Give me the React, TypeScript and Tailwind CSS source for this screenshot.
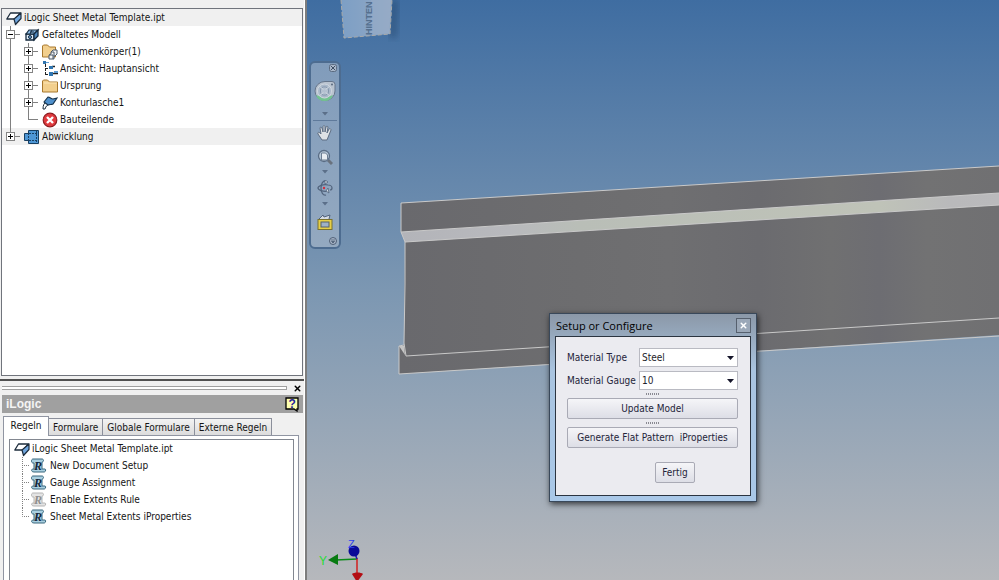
import type { ReactNode } from 'react';
import { X } from 'lucide-react';

const PartIcon = () => (
  <svg width="16" height="16" viewBox="0 0 16 16" className="shrink-0">
    <path d="M4.500 3h10L9 9H.8z" fill="#fff" stroke="#1d2c3c" strokeWidth="1.300" strokeLinejoin="round" />
    <path d="M15 3v5.500L9.500 14.500 8 9z" fill="#6fa5dc" stroke="#1d2c3c" strokeWidth="1.200" strokeLinejoin="round" />
  </svg>
);

const ModelIcon = () => (
  <svg width="16" height="16" viewBox="0 0 16 16" className="shrink-0">
    <path d="M2 7h8v6H2z" fill="#dbe9f5" stroke="#14293d" strokeWidth="1.3" />
    <path d="M2 7l3-4h9l-4 4z" fill="#8dbbe4" stroke="#14293d" strokeWidth="1.2" />
    <path d="M14 3v6l-4 4V7z" fill="#4c86bd" stroke="#14293d" strokeWidth="1.3" />
    <path d="M6 5h4M8 3L6 7" stroke="#14293d" />
    <circle cx="6" cy="10" r="1.500" fill="#6fa5dc" stroke="#14293d" />
  </svg>
);

const FolderIcon = () => (
  <svg width="16" height="16" viewBox="0 0 16 16" className="shrink-0">
    <path d="M.5 14V3l1-1h4l2 2h8v10z" fill="#f2cf8d" stroke="#a8782e" />
    <path d="M2 5h13" stroke="#fbe6b8" />
  </svg>
);

const SolidsIcon = () => (
  <svg width="16" height="16" viewBox="0 0 16 16" className="shrink-0">
    <path d="M.5 13V2l1-1h4l2 2h6v10z" fill="#f2cf8d" stroke="#a8782e" />
    <path d="M9 8l2-2h4v4l-2 2h-1v3H7v-4l2-1z" fill="#f3f5f7" stroke="#4c5966" />
    <path d="M7 11h4v4M9 8h3v4" fill="none" stroke="#4c5966" />
  </svg>
);

const ViewIcon = () => (
  <svg width="16" height="16" viewBox="0 0 16 16" className="shrink-0">
    <path d="M3.500 3v11M3 7.500h3M3 13.500h3" fill="none" stroke="#222" strokeDasharray="3 1" />
    <path d="M10 5.500h3M10 12.500h6" stroke="#222" strokeWidth="1.300" />
    <path d="M1 0h3v3H1zM7 5h4v3H7zM7 11h4v4H7z" fill="#2e74af" />
    <path d="M4 1h3v1H4zM12 10h4v2h-4z" fill="#5f9cd1" />
  </svg>
);

const FlangeIcon = () => (
  <svg width="16" height="16" viewBox="0 0 16 16" className="shrink-0">
    <path d="M1 14c0-4 1-6 4-7l3 2c-3 1-4 2-5 5z" fill="#fff" stroke="#1b2c3c" />
    <path d="M2 7l4-5c2 0 3 2 5 2l4-1-4 6c-2 1-3 0-5 1z" fill="#4f90cc" stroke="#16324b" strokeWidth="1.2" />
  </svg>
);

const EndIcon = () => (
  <svg width="16" height="16" viewBox="0 0 16 16" className="shrink-0">
    <circle cx="8" cy="8" r="6.800" fill="#e03a3e" stroke="#8f1d22" strokeWidth="1.2" />
    <path d="M5 5l6 6M11 5l-6 6" stroke="#fff" strokeWidth="2.400" />
  </svg>
);

const FlatIcon = () => (
  <svg width="16" height="16" viewBox="0 0 16 16" className="shrink-0">
    <path d="M.5 4.500h4v-3h10v13h-10v-3h-4z" fill="#4e97d6" stroke="#173f63" />
    <path d="M4.500 4v8M12.500 2v12M5 4.500h10M5 11.500h10" stroke="#173f63" strokeDasharray="2 1" />
  </svg>
);

const RuleIcon = ({ off = false }: { off?: boolean }) => (
  <svg width="17" height="16" viewBox="0 0 17 16" className="shrink-0">
    <path
      d="M3 1h9c2 0 2 3 0 3v7h3c1 0 1 3-1 3H4c-3 0-3-3-1-3h1V5H3C1 5 1 1 3 1z"
      fill={off ? '#e4e4e4' : '#a9cfe0'}
      stroke={off ? '#b4b4b4' : '#38677d'}
    />
    <text
      x="4"
      y="12"
      fill={off ? '#8f8f8f' : '#12273c'}
      className="font-['Liberation_Serif'] text-[12px] font-bold italic"
    >
      R
    </text>
  </svg>
);

type GuideKind = 'plus' | 'minus' | 'last' | 'plusLast' | 'pass';

const Guide = ({ kind }: { kind: GuideKind }) => (
  <svg width="18" height="17" viewBox="0 0 18 17" className="shrink-0" shapeRendering="crispEdges">
    <path d={kind === 'last' || kind === 'plusLast' ? 'M8.500 0v9' : 'M8.500 0v17'} stroke="#808080" />
    {kind !== 'pass' && <path d="M8 8.500h10" stroke="#808080" />}
    {(kind === 'plus' || kind === 'minus' || kind === 'plusLast') && (
      <>
        <rect x="4.500" y="4.500" width="8" height="8" fill="#fff" stroke="#848484" />
        <path d={kind === 'minus' ? 'M6 8.500h5' : 'M6 8.500h5M8.500 6v5'} stroke="#000" />
      </>
    )}
  </svg>
);

type Node = { label: string; icon: ReactNode; guides: GuideKind[]; shaded?: boolean };

const modelTree: Node[] = [
  { label: 'Gefaltetes Modell', icon: <ModelIcon />, guides: ['minus'] },
  { label: 'Volumenkörper(1)', icon: <SolidsIcon />, guides: ['pass', 'plus'] },
  { label: 'Ansicht: Hauptansicht', icon: <ViewIcon />, guides: ['pass', 'plus'] },
  { label: 'Ursprung', icon: <FolderIcon />, guides: ['pass', 'plus'] },
  { label: 'Konturlasche1', icon: <FlangeIcon />, guides: ['pass', 'plus'] },
  { label: 'Bauteilende', icon: <EndIcon />, guides: ['pass', 'last'] },
  { label: 'Abwicklung', icon: <FlatIcon />, guides: ['plusLast'], shaded: true },
];

const rules = [
  { label: 'New Document Setup' },
  { label: 'Gauge Assignment' },
  { label: 'Enable Extents Rule', off: true },
  { label: 'Sheet Metal Extents iProperties' },
];

const tabs = ['Formulare', 'Globale Formulare', 'Externe Regeln'];

const ModelBrowser = () => (
  <div className="mx-px mt-2 h-[368px] shrink-0 border border-[#70747c] bg-white">
    <div className="flex h-[17px] items-center gap-0.5 bg-[#f0f0f0] pl-1">
      <PartIcon />
      <span>iLogic Sheet Metal Template.ipt</span>
    </div>
    <ul>
      {modelTree.map((node) => (
        <li
          key={node.label}
          className={node.shaded ? 'flex h-[17px] items-center bg-[#f0f0f0]' : 'flex h-[17px] items-center'}
        >
          {node.guides.map((kind, i) => (
            <Guide key={i} kind={kind} />
          ))}
          <span className="ml-1 mr-0.5">{node.icon}</span>
          <span>{node.label}</span>
        </li>
      ))}
    </ul>
  </div>
);

const HelpIcon = () => (
  <svg width="14" height="15" viewBox="0 0 14 15">
    <path d="M1 1h12v11h-1v2l-3-2H1z" fill="#ffffb0" stroke="#000" strokeWidth="1.300" />
    <text x="3.500" y="11" fill="#23239a" className="font-['Liberation_Sans'] text-[12px] font-bold">?</text>
  </svg>
);

const RulesPanel = () => (
  <div className="flex min-h-0 flex-1 flex-col border-t-2 border-[#505050] pl-0.5 pr-px pt-1">
    <div className="flex h-2.5 shrink-0 items-center gap-1 pb-1">
      <div className="h-1 flex-1 border-y border-r border-[#a0a0a0] bg-white" />
      <button type="button" aria-label="Schließen" className="flex w-3 justify-center text-black">
        <X size={9} strokeWidth={4} />
      </button>
    </div>
    <div className="flex h-[18px] shrink-0 items-center justify-between bg-[#a0a0a0] pl-1 pr-1">
      <h2 className="font-['Liberation_Sans'] text-[12px] font-bold text-[#f4f4f4]">iLogic</h2>
      <button type="button" aria-label="Hilfe">
        <HelpIcon />
      </button>
    </div>
    <div className="flex h-[22px] shrink-0 items-end pl-px pt-0.5" role="tablist">
      <button
        type="button"
        role="tab"
        aria-selected="true"
        className="relative z-10 -mb-px h-5 w-[46px] border border-b-0 border-[#9095a2] bg-white pb-0.5"
      >
        Regeln
      </button>
      {tabs.map((tab) => (
        <button
          key={tab}
          type="button"
          role="tab"
          aria-selected="false"
          className="h-[17px] whitespace-nowrap border border-b-0 border-l-0 border-[#8b8f9b] bg-linear-to-b from-[#f3f3f3] to-[#dcdcdc] px-1"
        >
          {tab}
        </button>
      ))}
    </div>
    <div className="ml-px mr-1 flex flex-1 border border-b-0 border-[#9095a2] bg-white pl-[5px] pr-1 pt-[3px]">
      <div className="flex-1 border border-b-0 border-[#828790] bg-white">
        <div className="flex h-[17px] items-center gap-0.5 pl-1">
          <PartIcon />
          <span>iLogic Sheet Metal Template.ipt</span>
        </div>
        <ul className="pl-3">
          {rules.map((rule, i) => (
            <li key={rule.label} className="flex h-[17px] items-center">
              <svg width="8" height="17" viewBox="0 0 8 17" className="shrink-0">
                <path
                  d={i === rules.length - 1 ? 'M.5 0v8.500H8' : 'M.5 0v17M0 8.500h8'}
                  fill="none"
                  stroke="#808080"
                  strokeDasharray="1 1"
                />
              </svg>
              <RuleIcon off={rule.off} />
              <span className="ml-[3px]">{rule.label}</span>
            </li>
          ))}
        </ul>
      </div>
    </div>
  </div>
);

// Bent profile, view cube corner and axis triad
const Scene = () => (
  <svg viewBox="0 0 692 580" preserveAspectRatio="xMinYMin slice" className="h-full w-full">
    <defs>
      <linearGradient id="flange" x1="0" x2="1">
        <stop offset="0" stopColor="#b3b4b9" />
        <stop offset=".18" stopColor="#b8b9bd" />
        <stop offset=".3" stopColor="#b9beb7" />
        <stop offset=".8" stopColor="#bfc3b8" />
        <stop offset=".92" stopColor="#b9b9bb" />
        <stop offset="1" stopColor="#bababc" />
      </linearGradient>
      <linearGradient id="web" x1="0" x2="1">
        <stop offset="0" stopColor="#69696d" />
        <stop offset=".3" stopColor="#6d6d6f" />
        <stop offset=".45" stopColor="#6f6f71" />
        <stop offset=".6" stopColor="#6b6b6f" />
        <stop offset=".72" stopColor="#707071" />
        <stop offset=".8" stopColor="#6d6d72" />
        <stop offset=".88" stopColor="#727273" />
        <stop offset="1" stopColor="#707072" />
      </linearGradient>
      <linearGradient id="cube" x1="0" x2="1">
        <stop offset="0" stopColor="#7d9fc5" />
        <stop offset="1" stopColor="#91a8c5" />
      </linearGradient>
      <filter id="soft">
        <feGaussianBlur stdDeviation="3" />
      </filter>
    </defs>

    <path d="M82 0h10l-2 38h-8z" fill="#26496f" opacity=".5" filter="url(#soft)" />
    <path d="M34 0h51l-2 34-46 4z" fill="url(#cube)" />
    <path d="M34 0l3 38 46-4 2-34" fill="none" stroke="#a9aaa9" strokeDasharray="4 2" />
    <path d="M64 0h20l-2 33-18 2z" fill="#a0b1c9" opacity=".35" />
    <text
      transform="translate(65 35) rotate(-90)"
      fill="#55708f"
      className="font-['Liberation_Sans'] text-[9px] font-bold"
    >
      HINTEN
    </text>

    <path d="M94 203L692 166v169L92 374V346l5-1 1-103-4-10z" fill="url(#web)" />
    <path d="M94 232L692 193v12L98 242z" fill="url(#flange)" />
    <g fill="none" stroke="#c9c9c9">
      <path d="M692 166L94 203v29l4 10v43l-1 58 2 13 593-38" />
      <path d="M94 232L692 193M98 242L692 205M97 345l-5 1v28l600-38" />
    </g>
    <path d="M92 346h5l1 9z" fill="#c5c5c5" />

    <path d="M50 559l-21 1" stroke="#0b8b18" strokeWidth="1.500" />
    <path d="M21 560l10-6v11z" fill="#087b12" />
    <path d="M50 558v17" stroke="#d01f1f" strokeWidth="1.500" />
    <path d="M45 574c2-2 9-2 11 0l-6 8z" fill="#b30e14" />
    <path d="M47 551l3 8" stroke="#1a1ab0" strokeWidth="1.500" />
    <circle cx="47" cy="551" r="5.500" fill="#0a0a97" />
    <text x="12" y="565" fill="#27dc35" className="font-['Liberation_Sans'] text-[12px]">Y</text>
    <text x="41" y="548" fill="#2d3ff0" className="font-['Liberation_Sans'] text-[11px]">Z</text>
  </svg>
);

const Caret = () => (
  <svg width="6" height="4" viewBox="0 0 6 4">
    <path d="M0 0h6L3 3.500z" fill="#5b6f89" />
  </svg>
);

const NavBar = () => (
  <nav
    aria-label="Navigation"
    className="absolute left-0.5 top-[61px] flex h-[188px] w-8 flex-col items-center rounded-md border-2 border-[#4d6c90] bg-linear-to-b from-[#819cbb] to-[#94a9c0]"
  >
    <button type="button" aria-label="Schließen" className="mr-0.5 mt-px self-end">
      <svg width="8" height="8" viewBox="0 0 8 8">
        <rect x=".5" y=".5" width="7" height="7" rx="2" fill="#a9b7c9" stroke="#5b6b80" />
        <path d="M2 2l4 4M6 2L2 6" stroke="#3f4e62" />
      </svg>
    </button>
    <button type="button" aria-label="Rad" className="mt-2">
      <svg width="24" height="24" viewBox="0 0 24 24">
        <path d="M12 1.500h7q3 0 3 3V11a10 9.500 0 1 1-10-9.500z" fill="#b9c3cf" stroke="#65758b" />
        <path d="M3 15q9 4 17 0-2 6-8.500 6T3 15z" fill="#73c391" />
        <circle cx="11.500" cy="11" r="7" fill="#a9b8c9" stroke="#d0d7df" />
        <rect x="7.500" y="7" width="8" height="8" rx="3" fill="#b4c1d0" stroke="#8395ac" />
        <path d="M7 6.500l3 3M16 6.500l-3 3M7 15.500l3-3M16 15.500l-3-3" stroke="#dbe1e8" />
        <circle cx="19" cy="4.500" r="1" fill="#5b6b80" />
      </svg>
    </button>
    <span className="mt-2"><Caret /></span>
    <div className="mt-1 h-px w-6 bg-[#5f7a9b]" />
    <button type="button" aria-label="Pan" className="mt-1">
      <svg width="16" height="16" viewBox="0 0 16 16">
        <path
          d="M5 15l-4-6c-1-2 1-2 2-1l1 1-1-6c0-1 1-1 2 0l1 4V2c0-2 2-2 2 0v5l1-5c0-1 2-1 2 0l-1 6 2-4c1-1 2 0 2 1l-2 5-2 5z"
          fill="#dde1e5"
          stroke="#5d6d82"
        />
      </svg>
    </button>
    <button type="button" aria-label="Zoom" className="mt-2">
      <svg width="16" height="17" viewBox="0 0 16 17">
        <path d="M11 11l4 4" stroke="#69727e" strokeWidth="3" />
        <circle cx="7" cy="7" r="5.500" fill="#b9c9d9" stroke="#5a6d85" strokeWidth="1.300" />
        <path d="M4.500 4h4l2 2v5h-6z" fill="#e9edf2" stroke="#6d7e93" />
      </svg>
    </button>
    <span className="mt-1"><Caret /></span>
    <button type="button" aria-label="Orbit" className="mt-1.5">
      <svg width="16" height="16" viewBox="0 0 16 16">
        <path d="M9 15c-3 1-5-3-5-7s2-8 5-7" fill="none" stroke="#52647d" strokeWidth="1.200" />
        <path d="M11 11c-5 1-10-1-10-3s5-4 10-3c3 0 4 2 4 3s-1 2-2 2" fill="none" stroke="#52647d" strokeWidth="1.200" />
        <path d="M8 0l3 2-3 2zM11 8l-2 3 3 2z" fill="#d5dbe2" stroke="#52647d" strokeWidth=".8" />
        <circle cx="7" cy="8" r="1.200" fill="#d42f3c" />
      </svg>
    </button>
    <span className="mt-1.5"><Caret /></span>
    <button type="button" aria-label="Ansicht" className="mt-2">
      <svg width="18" height="17" viewBox="0 0 18 17">
        <path d="M3 5l4-4 1 2 6-2-1 4" fill="#d5dbe2" stroke="#52647d" />
        <rect x="2" y="5.500" width="14" height="10" fill="#e6cf48" stroke="#7b722f" />
        <rect x="5" y="8" width="8" height="5" fill="#9fb2c8" stroke="#55606d" />
      </svg>
    </button>
    <button type="button" aria-label="Anpassen" className="mb-0.5 mr-0.5 mt-auto self-end">
      <svg width="8" height="8" viewBox="0 0 8 8">
        <circle cx="4" cy="4" r="3.500" fill="#a9b7c9" stroke="#4e5f76" />
        <path d="M2 3h4M2.500 4.500h3L4 6z" fill="#4e5f76" stroke="#4e5f76" strokeWidth=".8" />
      </svg>
    </button>
  </nav>
);

const Field = ({ id, label, value }: { id: string; label: string; value: string }) => (
  <div className="flex items-center justify-between">
    <label htmlFor={id} className="whitespace-nowrap">{label}</label>
    <div className="relative">
      <select
        id={id}
        defaultValue={value}
        className="block h-[19px] w-[99px] appearance-none border border-[#b9bac2] bg-white pl-0.5 text-[#1e1e2c]"
      >
        <option>{value}</option>
      </select>
      <svg width="7" height="4" viewBox="0 0 7 4" className="pointer-events-none absolute right-1 top-2">
        <path d="M0 0h7L3.500 4z" fill="#15152a" />
      </svg>
    </div>
  </div>
);

const Grip = () => (
  <div className="flex h-2 items-center justify-center gap-px">
    {[0, 1, 2, 3, 4, 5, 6].map((n) => (
      <span key={n} className="h-0.5 w-px bg-[#8a8a92]" />
    ))}
  </div>
);

const formButton =
  'h-[21px] rounded-xs border border-[#a9aab5] bg-linear-to-b from-[#f5f5f8] to-[#dddee6] whitespace-pre';

const SetupDialog = () => (
  <div
    role="dialog"
    aria-labelledby="setup-title"
    className="absolute left-[242px] top-[313px] w-[208px] border border-[#39485a] bg-linear-to-b from-[#8b98a8] via-[#a9c4e0] via-30% to-[#a9c8e8] px-[5px] pb-[5px] text-[#24243a] shadow-[1px_2px_6px_rgba(0,0,0,0.7)]"
  >
    <div className="flex h-[22px] items-center justify-between">
      <h2 id="setup-title" className="pl-px font-['Open_Sans'] text-[11px] text-black">Setup or Configure</h2>
      <button
        type="button"
        aria-label="Close"
        className="flex h-[15px] w-[15px] items-center justify-center border border-[#56606e] bg-[#9ba8b8] text-white"
      >
        <X size={9} strokeWidth={4} />
      </button>
    </div>
    <div className="flex h-[160px] flex-col border border-[#2b3440] bg-[#ebebf0] pl-[11px] pr-3 pt-[11px]">
      <div className="flex flex-col gap-1">
        <Field id="material-type" label="Material Type" value="Steel" />
        <Field id="material-gauge" label="Material Gauge" value="10" />
      </div>
      <Grip />
      <button type="button" className={formButton}>Update Model</button>
      <Grip />
      <button type="button" className={formButton}>{'Generate Flat Pattern  iProperties'}</button>
      <button type="button" className={`${formButton} ml-22 mt-3.5 w-10`}>Fertig</button>
    </div>
  </div>
);

const App = () => {
  return (
    <div className="flex h-screen overflow-hidden bg-[#f0f0f0] font-['DejaVu_Sans_Condensed','Liberation_Sans',sans-serif] text-[10px] leading-[15px] text-[#151515]">
      <aside className="flex w-[304px] shrink-0 flex-col">
        <ModelBrowser />
        <div className="h-[3px] shrink-0" />
        <RulesPanel />
      </aside>
      <div className="w-[3px] shrink-0 border-r-2 border-[#7d7d7d] bg-white" />
      <main className="relative flex-1 overflow-hidden bg-linear-to-b from-[#3f6da1] via-[#7c97b2] via-50% to-[#b6b8bc]">
        <Scene />
        <NavBar />
        <SetupDialog />
      </main>
    </div>
  );
};

export default App;
